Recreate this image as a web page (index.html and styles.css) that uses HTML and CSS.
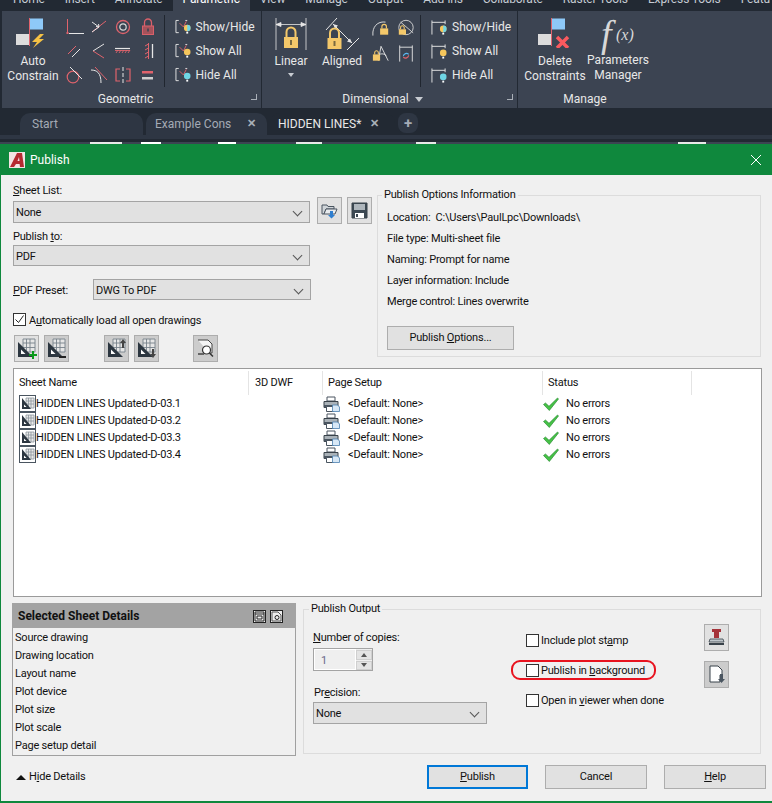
FILE: index.html
```html
<!DOCTYPE html>
<html lang="en">
<head>
    <meta charset="UTF-8">
    <title>Publish</title>
    <link rel="stylesheet" href="styles.css">
</head>
<body>
    <svg class="defs" width="0" height="0">
        <symbol id="sheet" viewBox="0 0 17 17">
            <rect x="0.5" y="0.5" width="16" height="16" fill="#fff" stroke="#4a5560"/>
            <path d="M7 3h8v10H7zM9.5 3v10M12 3v10M7 6h8M7 9h8" fill="#e8e8e8" stroke="#8a949c" stroke-width="0.8"/>
            <path d="M3 3v11h9z" fill="#2c3640"/>
            <path d="M5 9.5v2.5h2.6z" fill="#fff"/>
        </symbol>
        <symbol id="sheet-big" viewBox="0 0 21 21">
            <path d="M7 1h12v13H7zM10.500 1v13M14 1v13M7 5h12M7 9.500h12" fill="#e6e6e6" stroke="#77818a" stroke-width="0.9"/>
            <path d="M2 4v15h15z" fill="#2c3640"/>
            <path d="M5 11.500v4.500h4.500z" fill="#fff"/>
        </symbol>
        <symbol id="printer" viewBox="0 0 17 16">
            <path d="M4 1h8v4H4z" fill="#fff" stroke="#4a5560"/>
            <path d="M1 5.500h14v6H1z" fill="#aab2b8" stroke="#39424a"/>
            <path d="M1 9h14v2.500H1z" fill="#4a5560"/>
            <path d="M3.500 10.500h7v5h-7z" fill="#fff" stroke="#4a5560"/>
            <path d="M9.500 9h5l2 2v4.500h-7z" fill="#d8e8f6" stroke="#4a7fb0" stroke-width="0.8"/>
        </symbol>
        <symbol id="check" viewBox="0 0 16 14">
            <path d="M0.500 7.500l2-1.500 3.500 3.300L14.500 1l1 1L6.300 13.500z" fill="#46c246" stroke="#1f7f2a" stroke-width="0.6"/>
        </symbol>
        <symbol id="bracket" viewBox="0 0 17 16">
            <path d="M4 1H1v13h3" fill="none" stroke="#e6e6e6" stroke-width="1"/>
            <path d="M5 4l4 4 3-6" fill="none" stroke="#e0636c" stroke-width="1"/>
            <path d="M11 1h2" stroke="#e6e6e6"/>
        </symbol>
        <symbol id="dim-bracket" viewBox="0 0 17 17">
            <path d="M1 1v15M15 1v4M1 3h14" fill="none" stroke="#e6e6e6" stroke-width="1"/>
        </symbol>
    </svg>

    <div class="app-tabs">
        <span>Home</span><span>Insert</span><span>Annotate</span><span class="active">Parametric</span><span>View</span><span>Manage</span><span>Output</span><span>Add-ins</span><span>Collaborate</span><span>Raster Tools</span><span>Express Tools</span><span>Featu</span>
    </div>

    <div class="ribbon">
        <section class="panel panel-geo">
            <div class="panel-body">
                <div class="big-btn big-auto">
                    <svg width="34" height="30" viewBox="0 0 34 30">
                        <rect x="14" y="0.500" width="13" height="11" fill="#8ec9f8"/>
                        <rect x="0" y="16" width="13" height="11" fill="#dcdcdc"/>
                        <path d="M13.500 0v28" stroke="#e0636c" stroke-width="1"/>
                        <path d="M24 16l-8 8h5l-4 6 11-9h-5l5-5z" fill="#f5c244"/>
                    </svg>
                    <div>Auto<br>Constrain</div>
                </div>
                <div class="mini-grid">
                    <svg viewBox="0 0 18 18"><path d="M2.500 1v13" stroke="#e0636c"/><path d="M4 15.500h15" stroke="#e6e6e6"/><rect x="1.500" y="14" width="2" height="2" fill="#e0636c"/></svg>
                    <svg viewBox="0 0 18 18"><path d="M2 14L16 3" stroke="#e0636c"/><path d="M2 14l7-5" stroke="#e6e6e6"/><path d="M2 4l7 5M9 9l-3-.500M9 9l-.500-3" stroke="#e6e6e6" fill="none"/></svg>
                    <svg viewBox="0 0 18 18"><circle cx="9" cy="9" r="6.500" fill="none" stroke="#e0636c" stroke-width="1.300"/><circle cx="9" cy="9" r="3.200" fill="none" stroke="#d8d8d8" stroke-width="1.200"/></svg>
                    <svg viewBox="0 0 18 18"><path d="M5.500 8V4.500a3.500 3.500 0 0 1 7 0V8" fill="none" stroke="#d9606a" stroke-width="1.300"/><rect x="3.500" y="8" width="11" height="8.500" fill="#a5525b" stroke="#d9606a"/><rect x="8.200" y="10.500" width="1.600" height="3" fill="#3c4452"/></svg>
                    <svg viewBox="0 0 18 18"><path d="M3 12l8-8" stroke="#e0636c"/><path d="M7 15l8-8" stroke="#e6e6e6"/></svg>
                    <svg viewBox="0 0 18 18"><path d="M3 9l11-7" stroke="#e6e6e6"/><path d="M3 9l11 7" stroke="#e0636c"/></svg>
                    <svg viewBox="0 0 18 18"><path d="M1 6.500h15" stroke="#e6e6e6" stroke-width="1.200"/><path d="M2 11l2-3M5 11l2-3M8 11l2-3M11 11l2-3M14 11l2-3M1 8.500h15" stroke="#e0636c" fill="none" stroke-width="0.900"/></svg>
                    <svg viewBox="0 0 18 18"><path d="M13.500 2v14" stroke="#e6e6e6" stroke-width="1.300"/><path d="M9.500 1v16M6 4l3.500-2M6 8l3.500-2M6 12l3.500-2M6 16l3.500-2" stroke="#e0636c" fill="none"/></svg>
                    <svg viewBox="0 0 18 18"><circle cx="8" cy="11" r="5.800" fill="none" stroke="#e0636c" stroke-width="1.200"/><path d="M5 1l12 12" stroke="#e6e6e6"/></svg>
                    <svg viewBox="0 0 18 18"><path d="M1 4c6 0 10 3 10 13" fill="none" stroke="#e6e6e6"/><path d="M5 1l12 13" stroke="#e0636c"/></svg>
                    <svg viewBox="0 0 18 18"><path d="M6 3H2v12h4M12 3h4v12h-4" fill="none" stroke="#e0636c" stroke-width="1.200"/><path d="M9 1v4M9 7v4M9 13v4" stroke="#e6e6e6"/></svg>
                    <svg viewBox="0 0 18 18"><rect x="3" y="5" width="11" height="2.500" fill="#e0636c"/><rect x="3" y="11" width="11" height="2.500" fill="#cfcfcf"/></svg>
                </div>
                <div class="vsep"></div>
                <div class="toggles">
                    <div class="toggle"><svg width="16" height="16" viewBox="0 0 17 16"><use href="#bracket"/><circle cx="13" cy="9" r="3.500" fill="#f5c65c"/><path d="M13 5.500a3.500 3.500 0 0 1 0 7z" fill="#6fd6e6"/><rect x="12" y="13" width="2" height="2" fill="#fff"/></svg>Show/Hide</div>
                    <div class="toggle"><svg width="16" height="16" viewBox="0 0 17 16"><use href="#bracket"/><circle cx="13" cy="9" r="3.500" fill="#f5c65c"/><rect x="12" y="13" width="2" height="2" fill="#fff"/></svg>Show All</div>
                    <div class="toggle"><svg width="16" height="16" viewBox="0 0 17 16"><use href="#bracket"/><circle cx="13" cy="9" r="3.500" fill="#6fd6e6"/><rect x="12" y="13" width="2" height="2" fill="#fff"/></svg>Hide All</div>
                </div>
            </div>
            <div class="panel-title">Geometric<span class="launcher"></span></div>
        </section>

        <section class="panel panel-dim">
            <div class="panel-body">
                <div class="big-btn big-linear">
                    <svg width="32" height="32" viewBox="0 0 32 32">
                        <path d="M1 0v32M31 0v32M1 6.500h30M1 6.500l5-2v4zM31 6.500l-5-2v4z" stroke="#e6e6e6" fill="#e6e6e6" stroke-width="0.800"/>
                        <path d="M11.500 19v-5a4.500 4.500 0 0 1 9 0v5" fill="none" stroke="#f4c86a" stroke-width="2"/>
                        <rect x="9" y="19" width="14" height="11" fill="#f4c86a"/>
                        <rect x="15" y="22" width="2" height="5" fill="#7a6a40"/>
                    </svg>
                    <div>Linear</div>
                    <div class="caret"></div>
                </div>
                <div class="big-btn big-aligned">
                    <svg width="34" height="32" viewBox="0 0 34 32">
                        <path d="M1 12L12 0M22 32L34 20M8 6l19 19" stroke="#e6e6e6" fill="none"/>
                        <path d="M8 6l5 1.500-3 3zM27 25l-5-1.500 3-3z" fill="#e6e6e6"/>
                        <path d="M5 20v-5a4.500 4.500 0 0 1 9 0v5" fill="none" stroke="#f4c86a" stroke-width="2"/>
                        <rect x="2.500" y="20" width="14" height="11" fill="#f4c86a"/>
                        <rect x="8.500" y="23" width="2" height="5" fill="#7a6a40"/>
                    </svg>
                    <div>Aligned</div>
                </div>
                <div class="dim-grid">
                    <svg viewBox="0 0 20 20"><path d="M1 15C2 7 8 3 15 4M1 15v4" fill="none" stroke="#e6e6e6"/><rect x="9" y="11" width="9" height="7" fill="#f4c86a"/><path d="M11 11V9a2.500 2.500 0 0 1 5 0v2" fill="none" stroke="#f4c86a" stroke-width="1.300"/></svg>
                    <svg viewBox="0 0 20 20"><circle cx="10" cy="10" r="8" fill="none" stroke="#d8d8d8"/><path d="M4 4l14 12" stroke="#d8d8d8"/><rect x="2" y="12" width="8" height="6" fill="#f4c86a"/><path d="M4 12v-2a2 2 0 0 1 4 0v2" fill="none" stroke="#f4c86a" stroke-width="1.200"/></svg>
                    <svg viewBox="0 0 20 20"><path d="M10 2L7 18M10 2l8 16M8 11c3-1 6-1 8 2" fill="none" stroke="#e6e6e6"/><rect x="1" y="11" width="8" height="7" fill="#f4c86a"/><path d="M3 11V9a2 2 0 0 1 4 0v2" fill="none" stroke="#f4c86a" stroke-width="1.200"/></svg>
                    <svg viewBox="0 0 20 20"><path d="M3 1v18M17 1v18M3 3h14" fill="none" stroke="#e6e6e6"/><path d="M7 13a3.500 3.500 0 0 1 6-2" fill="none" stroke="#5bb8f0" stroke-width="1.300"/><path d="M13 12a3.500 3.500 0 0 1-6 2" fill="none" stroke="#e0636c" stroke-width="1.300"/></svg>
                </div>
                <div class="vsep"></div>
                <div class="toggles">
                    <div class="toggle"><svg width="16" height="17" viewBox="0 0 17 17"><use href="#dim-bracket"/><circle cx="13" cy="10" r="3.500" fill="#f5c65c"/><path d="M13 6.500a3.500 3.500 0 0 1 0 7z" fill="#6fd6e6"/><rect x="12" y="14" width="2" height="2" fill="#fff"/></svg>Show/Hide</div>
                    <div class="toggle"><svg width="16" height="17" viewBox="0 0 17 17"><use href="#dim-bracket"/><circle cx="13" cy="10" r="3.500" fill="#f5c65c"/><rect x="12" y="14" width="2" height="2" fill="#fff"/></svg>Show All</div>
                    <div class="toggle"><svg width="16" height="17" viewBox="0 0 17 17"><use href="#dim-bracket"/><circle cx="13" cy="10" r="3.500" fill="#6fd6e6"/><rect x="12" y="14" width="2" height="2" fill="#fff"/></svg>Hide All</div>
                </div>
            </div>
            <div class="panel-title">Dimensional <span class="caret caret-inline"></span><span class="launcher"></span></div>
        </section>

        <section class="panel panel-manage">
            <div class="panel-body">
                <div class="big-btn big-delete">
                    <svg width="34" height="30" viewBox="0 0 34 30">
                        <rect x="14" y="0.500" width="13" height="11" fill="#8ec9f8"/>
                        <rect x="0" y="16" width="13" height="11" fill="#dcdcdc"/>
                        <path d="M13.500 0v28" stroke="#e0636c" stroke-width="1"/>
                        <path d="M19 19l11 11M30 19L19 30" stroke="#fa5a5f" stroke-width="3.500"/>
                    </svg>
                    <div>Delete<br>Constraints</div>
                </div>
                <div class="big-btn big-params">
                    <div class="fx"><i class="fx-f">f</i><i class="fx-x">(x)</i></div>
                    <div>Parameters<br>Manager</div>
                </div>
            </div>
            <div class="panel-title">Manage</div>
        </section>
    </div>

    <div class="doc-tabs">
        <div class="doc-tab doc-start">Start</div>
        <div class="doc-tab doc-example">Example Cons<span class="tab-x">✕</span></div>
        <div class="doc-tab doc-active">HIDDEN LINES*<span class="tab-x">✕</span></div>
        <div class="doc-add">+</div>
    </div>
    <div class="tab-strip"></div>
    <div class="tool-strip"></div>

    <div class="dialog">
        <div class="titlebar">
            <svg class="app-logo" width="16" height="16" viewBox="0 0 16 16">
                <rect width="16" height="16" fill="#f3e4e4"/>
                <path d="M1 15L8 1h5l2 14h-4l-.4-3H7l-2 3zM8.500 9h2l-.5-4z" fill="#b52a30"/>
            </svg>
            <span class="title-text">Publish</span>
            <svg class="title-close" width="12" height="12" viewBox="0 0 12 12"><path d="M1 1l10 10M11 1L1 11" stroke="#fff" stroke-width="1"/></svg>
        </div>

        <div class="dialog-body">
            <div class="top">
                <div class="top-left">
                    <div class="label label-first"><u>S</u>heet List:</div>
                    <div class="list-row">
                        <div class="select select-sheet">None</div>
                        <button class="icon-btn btn-open">
                            <svg width="17" height="17" viewBox="0 0 17 17"><path d="M1 3h5l1 1.500h6V7H5L3 12H1z" fill="#cfd4d8" stroke="#4a5560"/><path d="M5 7h11l-2 5H3z" fill="#e8ebee" stroke="#4a5560"/><path d="M9 9h3v4h2l-3.500 3.500L7 13h2z" fill="#2f7fd0"/></svg>
                        </button>
                        <button class="icon-btn btn-save">
                            <svg width="17" height="17" viewBox="0 0 17 17"><path d="M1 1h15v15H1z" fill="#3c4852" stroke="#39424a"/><rect x="3" y="2" width="11" height="6" fill="#aeb6bc"/><rect x="4" y="11" width="9" height="5" fill="#fff"/><rect x="5" y="12" width="2" height="3" fill="#3c4852"/></svg>
                        </button>
                    </div>
                    <div class="label label-to">Publish <u>t</u>o:</div>
                    <div class="select select-to">PDF</div>
                    <div class="preset-row">
                        <div class="label"><u>P</u>DF Preset:</div>
                        <div class="select select-preset">DWG To PDF</div>
                    </div>
                    <label class="check check-auto"><span class="box box-on"><svg width="11" height="11" viewBox="0 0 11 11"><path d="M1.500 5.500l3 3 5-7" fill="none" stroke="#222" stroke-width="1"/></svg></span><span class="check-text">A<u>u</u>tomatically load all open drawings</span></label>
                    <div class="sheet-tools">
                        <button class="icon-btn"><svg width="21" height="21"><use href="#sheet-big"/><path d="M16 13h2v3h3v2h-3v3h-2v-3h-3v-2h3z" fill="#0a9a1a"/></svg></button>
                        <button class="icon-btn is-off"><svg width="21" height="21"><use href="#sheet-big"/><rect x="13" y="18" width="7" height="2" fill="#222"/></svg></button>
                        <button class="icon-btn is-off tool-gap"><svg width="21" height="21"><use href="#sheet-big"/><path d="M17 1l3 4h-2v5h-2V5h-2z" fill="#444"/></svg></button>
                        <button class="icon-btn is-off"><svg width="21" height="21"><use href="#sheet-big"/><path d="M16 11h2v5h2l-3 4-3-4h2z" fill="#444"/></svg></button>
                        <button class="icon-btn is-off tool-gap2"><svg width="19" height="19" viewBox="0 0 19 19"><path d="M2 1h10l4 4v9h-3M8 15H2z" fill="#f4f4f4" stroke="#444"/><circle cx="10.500" cy="11" r="4" fill="#fff" stroke="#333" stroke-width="1.200"/><path d="M13.500 14l3.500 3.500" stroke="#333" stroke-width="1.500"/></svg></button>
                    </div>
                </div>

                <fieldset class="group group-info">
                    <legend>Publish Options Information</legend>
                    <div class="info-row">Location: &nbsp;C:\Users\PaulLpc\Downloads\</div>
                    <div class="info-row">File type: Multi-sheet file</div>
                    <div class="info-row">Naming: Prompt for name</div>
                    <div class="info-row">Layer information: Include</div>
                    <div class="info-row">Merge control: Lines overwrite</div>
                    <button class="btn btn-options">Publish <u>O</u>ptions...</button>
                </fieldset>
            </div>

            <div class="sheets">
                <div class="sheets-row sheets-head">
                    <div class="col col-name">Sheet Name</div>
                    <div class="col col-3d">3D DWF</div>
                    <div class="col col-setup">Page Setup</div>
                    <div class="col col-status">Status</div>
                </div>
                <div class="sheets-row">
                    <div class="col col-name"><svg width="17" height="17"><use href="#sheet"/></svg>HIDDEN LINES Updated-D-03.1</div>
                    <div class="col col-3d"></div>
                    <div class="col col-setup"><svg width="17" height="16"><use href="#printer"/></svg>&lt;Default: None&gt;</div>
                    <div class="col col-status"><svg width="16" height="14"><use href="#check"/></svg>No errors</div>
                </div>
                <div class="sheets-row">
                    <div class="col col-name"><svg width="17" height="17"><use href="#sheet"/></svg>HIDDEN LINES Updated-D-03.2</div>
                    <div class="col col-3d"></div>
                    <div class="col col-setup"><svg width="17" height="16"><use href="#printer"/></svg>&lt;Default: None&gt;</div>
                    <div class="col col-status"><svg width="16" height="14"><use href="#check"/></svg>No errors</div>
                </div>
                <div class="sheets-row">
                    <div class="col col-name"><svg width="17" height="17"><use href="#sheet"/></svg>HIDDEN LINES Updated-D-03.3</div>
                    <div class="col col-3d"></div>
                    <div class="col col-setup"><svg width="17" height="16"><use href="#printer"/></svg>&lt;Default: None&gt;</div>
                    <div class="col col-status"><svg width="16" height="14"><use href="#check"/></svg>No errors</div>
                </div>
                <div class="sheets-row">
                    <div class="col col-name"><svg width="17" height="17"><use href="#sheet"/></svg>HIDDEN LINES Updated-D-03.4</div>
                    <div class="col col-3d"></div>
                    <div class="col col-setup"><svg width="17" height="16"><use href="#printer"/></svg>&lt;Default: None&gt;</div>
                    <div class="col col-status"><svg width="16" height="14"><use href="#check"/></svg>No errors</div>
                </div>
            </div>

            <div class="bottom">
                <div class="details">
                    <div class="details-head">
                        <b>Selected Sheet Details</b>
                        <span class="head-icon"><svg width="11" height="11" viewBox="0 0 11 11"><path d="M1 1h9v2H1zM1 3v7h9V3M3 5h5v3H3z" fill="none" stroke="#222"/></svg></span>
                        <span class="head-icon"><svg width="11" height="11" viewBox="0 0 11 11"><path d="M1 1h6l3 3v6H1z" fill="none" stroke="#555"/><circle cx="6" cy="6.500" r="2" fill="none" stroke="#222"/></svg></span>
                    </div>
                    <div class="details-row">Source drawing</div>
                    <div class="details-row">Drawing location</div>
                    <div class="details-row">Layout name</div>
                    <div class="details-row">Plot device</div>
                    <div class="details-row">Plot size</div>
                    <div class="details-row">Plot scale</div>
                    <div class="details-row">Page setup detail</div>
                </div>

                <fieldset class="group group-output">
                    <legend>Publish Output</legend>
                    <div class="output-left">
                        <div class="label"><u>N</u>umber of copies:</div>
                        <div class="spinner">
                            <span class="spin-val">1</span>
                            <span class="spin-btns"><i class="spin-up"></i><i class="spin-down"></i></span>
                        </div>
                        <div class="label label-prec">Pr<u>e</u>cision:</div>
                        <div class="select select-prec">None</div>
                    </div>
                    <div class="output-checks">
                        <label class="check"><span class="box"></span><span>Include plot st<u>a</u>mp</span></label>
                        <label class="check check-bg"><span class="box"></span><span>Publish in <u>b</u>ackground</span><span class="red-ring"></span></label>
                        <label class="check"><span class="box"></span><span>Open in <u>v</u>iewer when done</span></label>
                    </div>
                    <div class="output-btns">
                        <button class="icon-btn"><svg width="19" height="19" viewBox="0 0 19 19"><path d="M5 1h9v3h-2v6h-5V4H5z" fill="#a5333a"/><path d="M3 11h13l1 3H2z" fill="#bfc6cb" stroke="#39424a" stroke-width="0.800"/><rect x="2" y="15" width="15" height="2" fill="#39424a"/></svg></button>
                        <button class="icon-btn is-off"><svg width="19" height="19" viewBox="0 0 19 19"><path d="M3 1h8l4 4v5h-2v7H3z" fill="#fff" stroke="#39424a"/><path d="M13 9h3v5h2l-3.500 4-3.500-4h2z" fill="#4a5560"/></svg></button>
                    </div>
                </fieldset>
            </div>

            <div class="footer">
                <div class="hide-details"><span class="tri-up"></span><span>H<u>i</u>de Details</span></div>
                <button class="btn btn-main btn-default"><u>P</u>ublish</button>
                <button class="btn btn-main btn-gap">Cancel</button>
                <button class="btn btn-main btn-gap"><u>H</u>elp</button>
            </div>
        </div>
    </div>
</body>
</html>
```

FILE: styles.css
```css
* {
    box-sizing: border-box;
}
html, body {
    margin: 0;
    padding: 0;
}
body {
    width: 772px;
    height: 803px;
    overflow: hidden;
    background: #222933;
    font-family: Roboto, "Liberation Sans", sans-serif;
    font-size: 12px;
    color: #111;
}
.defs {
    position: absolute;
}
svg {
    display: block;
    flex: none;
}

/* app tabs */
.app-tabs {
    height: 11px;
    overflow: hidden;
    display: flex;
    padding-left: 3px;
    color: #c6ccd4;
    font-size: 12px;
    letter-spacing: -0.12px;
    line-height: 11px;
    background: #222933;
}
.app-tabs span {
    padding: 0 10px;
    margin-top: -6px;
    height: 17px;
    white-space: nowrap;
}
.app-tabs .active {
    background: #3c4452;
    color: #fff;
}

/* ribbon */
.ribbon {
    height: 97px;
    display: flex;
    padding-left: 2px;
    background: #222933;
    color: #e8e8e8;
}
.panel {
    height: 97px;
    display: flex;
    flex-direction: column;
    background: #3c4452;
    border-right: 1px solid #222933;
}
.panel-geo {
    width: 260px;
}
.panel-dim {
    width: 256px;
}
.panel-manage {
    width: 254px;
    border-right: 0;
}
.panel-body {
    height: 80px;
    display: flex;
    padding-top: 4px;
}
.panel-title {
    height: 17px;
    line-height: 16px;
    text-align: center;
    position: relative;
    color: #e8e8e8;
}
.panel-geo .panel-title {
    padding-right: 12px;
}
.panel-dim .panel-title {
    padding-right: 14px;
}
.panel-manage .panel-title {
    padding-right: 120px;
}
.launcher {
    position: absolute;
    right: 4px;
    top: 3px;
    width: 6px;
    height: 6px;
    border-right: 1.500px solid #aab0b8;
    border-bottom: 1.500px solid #aab0b8;
}
.big-btn {
    display: flex;
    flex-direction: column;
    align-items: center;
    text-align: center;
    line-height: 15px;
    white-space: nowrap;
}
.big-btn svg {
    margin-bottom: 6px;
}
.big-auto {
    width: 56px;
    margin-left: 3px;
    padding-top: 3px;
}
.big-linear {
    width: 40px;
    margin-left: 9px;
    padding-top: 3px;
}
.big-linear svg,
.big-aligned svg {
    margin-bottom: 4px;
}
.big-aligned {
    width: 48px;
    margin-left: 7px;
    padding-top: 3px;
}
.big-delete {
    width: 66px;
    margin-left: 4px;
    padding-top: 3px;
}
.big-params {
    width: 60px;
}
.caret {
    width: 0;
    height: 0;
    margin-top: 4px;
    border-left: 3.500px solid transparent;
    border-right: 3.500px solid transparent;
    border-top: 4px solid #c8ccd2;
}
.caret-inline {
    display: inline-block;
    vertical-align: middle;
    margin: 0 0 0 3px;
    border-left-width: 4px;
    border-right-width: 4px;
    border-top-width: 5px;
}
.mini-grid {
    display: grid;
    grid-template-columns: repeat(4, 18px);
    grid-auto-rows: 18px;
    column-gap: 6.500px;
    row-gap: 6px;
    margin: 3px 0 0 4px;
}
.mini-grid svg {
    width: 18px;
    height: 18px;
    overflow: visible;
}
.dim-grid {
    display: grid;
    grid-template-columns: repeat(2, 18px);
    grid-auto-rows: 19px;
    column-gap: 7px;
    row-gap: 7px;
    margin: 3px 0 0 6px;
}
.dim-grid svg {
    width: 18px;
    height: 19px;
}
.vsep {
    width: 1px;
    height: 72px;
    margin: 0 0 0 7px;
    background: #20262f;
}
.panel-dim .vsep {
    margin-left: 5px;
}
.toggles {
    margin-left: 10px;
    padding-top: 4px;
    display: flex;
    flex-direction: column;
    gap: 8px;
}
.toggle {
    height: 16px;
    display: flex;
    align-items: center;
    gap: 5px;
    white-space: nowrap;
}
.fx {
    height: 38px;
    width: 36px;
    position: relative;
    font-family: "Liberation Serif", serif;
    color: #d8d8d8;
}
.fx-f {
    font-size: 38px;
    line-height: 38px;
    position: absolute;
    left: 1px;
    top: 0;
}
.fx-x {
    font-size: 16px;
    line-height: 18px;
    position: absolute;
    left: 16px;
    top: 11px;
}

/* drawing tabs */
.doc-tabs {
    height: 27px;
    padding: 5px 0 0 20px;
    display: flex;
    gap: 3px;
    color: #a4abb5;
    background: #222933;
}
.doc-tab {
    height: 22px;
    line-height: 22px;
    border-radius: 10px 10px 0 0;
    background: #2e3643;
    display: flex;
    justify-content: space-between;
    white-space: nowrap;
}
.doc-start {
    width: 123px;
    padding-left: 12px;
}
.doc-example {
    width: 121px;
    padding: 0 11px 0 9px;
}
.doc-active {
    width: 125px;
    padding: 0 16px 0 8px;
    background: #222933;
    color: #e8e8e8;
}
.tab-x {
    color: #aab0b8;
    font-size: 11px;
    font-weight: 700;
}
.doc-add {
    width: 20px;
    height: 20px;
    border-radius: 8px;
    background: #2e3643;
    text-align: center;
    font-size: 15px;
    font-weight: 700;
    line-height: 20px;
}
.tab-strip {
    height: 4px;
    background: #2e3643;
}
.tool-strip {
    height: 5px;
    background-color: #222933;
    background-image:
        linear-gradient(90deg,
            #3c4452 90px, #e8e8e8 90px, #e8e8e8 122px,
            #3c4452 122px, #3c4452 141px, #fff 141px, #fff 161px,
            #3c4452 161px, #3c4452 218px, #fff 218px, #fff 236px,
            #3c4452 236px, #3c4452 296px, #e8e8e8 296px, #e8e8e8 322px,
            #3c4452 322px, #3c4452 416px, #e8e8e8 416px, #e8e8e8 436px,
            #3c4452 436px, #3c4452 678px, #e8e8e8 678px, #e8e8e8 706px,
            #3c4452 706px);
    background-size: 100% 2px;
    background-position: bottom;
    background-repeat: no-repeat;
}

/* dialog */
.dialog {
    height: 659px;
    display: flex;
    flex-direction: column;
    background: #f0f0f0;
    border-left: 1px solid #0f883d;
    border-bottom: 2px solid #0f883d;
}
.titlebar {
    height: 31px;
    margin-left: -1px;
    display: flex;
    align-items: center;
    padding: 0 10px 0 9px;
    background: #0f883d;
    color: #fff;
}
.app-logo {
    margin-right: 5px;
}
.title-text {
    flex: 1;
}
.dialog-body {
    flex: 1;
    padding-left: 12px;
    font-size: 11px;
    letter-spacing: -0.2px;
    line-height: 16px;
}
.top {
    height: 193px;
    display: flex;
}
.top-left {
    width: 364px;
}
.label {
    height: 16px;
    line-height: 16px;
    white-space: nowrap;
}
.top-left .label {
    padding-top: 1px;
}
.label-first {
    margin: 7px 0 -1px;
}
.list-row {
    display: flex;
    height: 27px;
}
.select {
    height: 22px;
    line-height: 22px;
    padding-left: 2px;
    border: 1px solid #a4a4a4;
    background: #e1e1e1;
    position: relative;
}
.select::after {
    content: "";
    position: absolute;
    right: 8px;
    top: 6px;
    width: 6px;
    height: 6px;
    border-right: 1px solid #555;
    border-bottom: 1px solid #555;
    transform: rotate(45deg);
}
.select-sheet {
    width: 297px;
    margin-top: 4px;
}
.select-to {
    width: 297px;
    height: 21px;
}
.select-preset {
    width: 218px;
    height: 21px;
}
.select-prec {
    width: 174px;
}
.label-to {
    margin-top: 4px;
    margin-bottom: 1px;
}
.preset-row {
    margin-top: 13px;
    display: flex;
    align-items: center;
    justify-content: space-between;
    width: 298px;
}
.icon-btn {
    width: 25px;
    height: 27px;
    padding: 0;
    display: flex;
    align-items: center;
    justify-content: center;
    border: 1px solid #adadad;
    background: #e1e1e1;
}
.is-off {
    background: #cccccc;
}
.btn-open {
    margin-left: 7px;
}
.btn-save {
    margin-left: 5px;
}
.check {
    display: flex;
    align-items: center;
    height: 13px;
    white-space: nowrap;
    position: relative;
}
.check-auto {
    margin-top: 13px;
}
.check-auto .box {
    margin-right: 3px;
}
.check-text {
    padding-top: 2px;
}
.box {
    width: 13px;
    height: 13px;
    flex: none;
    margin-right: 2px;
    border: 1px solid #333;
    background: #fff;
    display: flex;
    align-items: center;
    justify-content: center;
}
.sheet-tools {
    margin-top: 9px;
    padding-left: 1px;
    display: flex;
    gap: 5px;
}
.tool-gap {
    margin-left: 30px;
}
.tool-gap2 {
    margin-left: 29px;
}
.group {
    margin: 0;
    padding: 0;
    border: 1px solid #dcdcdc;
    min-width: 0;
}
.group legend {
    padding: 0 2px;
    margin-left: 5px;
    line-height: 14px;
}
.group-info {
    width: 384px;
    height: 169px;
    margin-top: 13px;
    padding: 5px 0 0 9px;
}
.group-info legend {
    margin-left: -5px;
}
.info-row {
    height: 21px;
    line-height: 21px;
}
.btn {
    border: 1px solid #adadad;
    background: #e1e1e1;
    font: inherit;
    letter-spacing: inherit;
    color: #111;
    padding: 0;
}
.btn-options {
    width: 127px;
    height: 24px;
    margin-top: 14px;
    display: block;
}

/* sheet list */
.sheets {
    width: 749px;
    height: 229px;
    padding: 2px 0 0 0;
    border: 1px solid #9a9a9a;
    background: #fff;
}
.sheets-row {
    display: flex;
    height: 17px;
    align-items: center;
}
.sheets-head {
    height: 24px;
}
.col {
    height: 100%;
    display: flex;
    align-items: center;
    white-space: nowrap;
}
.col-name {
    width: 235px;
    padding-left: 5px;
}
.col-3d {
    width: 74px;
    padding-left: 6px;
}
.col-setup {
    width: 220px;
    gap: 8px;
}
.col-status {
    width: 149px;
    gap: 7px;
}
.sheets-head .col {
    border-right: 1px solid #e4e4e4;
}
.sheets-head .col-setup,
.sheets-head .col-status {
    padding-left: 5px;
}

/* bottom */
.bottom {
    height: 161px;
    display: flex;
    align-items: flex-start;
}
.details {
    width: 284px;
    height: 153px;
    margin: 6px 0 0 -1px;
    border: 1px solid #a0a0a0;
    border-top: 0;
}
.details-head {
    height: 25px;
    margin: 0 -1px;
    padding: 1px 13px 0 6px;
    display: flex;
    align-items: center;
    gap: 4px;
    background: #a3a3a3;
    color: #111;
}
.details-head b {
    flex: 1;
    font-size: 12px;
    letter-spacing: 0;
}
.head-icon {
    width: 13px;
    height: 13px;
    display: flex;
    align-items: center;
    justify-content: center;
    border: 1px solid #222;
    background: #eee;
}
.details-row {
    height: 18px;
    line-height: 20px;
    padding-left: 2px;
}
.group-output {
    width: 458px;
    height: 152px;
    margin: 5px 0 0 7px;
    padding: 8px 0 0;
    display: flex;
}
.output-left {
    width: 222px;
    padding: 6px 0 0 9px;
}
.spinner {
    width: 60px;
    height: 23px;
    margin-top: 2px;
    border: 1px solid #a4a4a4;
    display: flex;
    background: #efefef;
    color: #6a6a8a;
}
.spin-val {
    flex: 1;
    padding-left: 6px;
    line-height: 21px;
    border: 1px solid #fff;
}
.spin-btns {
    width: 16px;
    display: flex;
    flex-direction: column;
    gap: 1px;
    padding-top: 1px;
}
.spin-btns i {
    flex: 1;
    display: flex;
    align-items: center;
    justify-content: center;
    background: #e4e4e4;
    border: 1px solid #cfcfcf;
}
.spin-up::after {
    content: "";
    border-left: 3px solid transparent;
    border-right: 3px solid transparent;
    border-bottom: 4px solid #555;
}
.spin-down::after {
    content: "";
    border-left: 3px solid transparent;
    border-right: 3px solid transparent;
    border-top: 4px solid #555;
}
.label-prec {
    margin-top: 14px;
    margin-bottom: 1px;
    padding-left: 1px;
}
.output-checks {
    width: 178px;
    padding-top: 10px;
    display: flex;
    flex-direction: column;
    gap: 17px;
}
.red-ring {
    position: absolute;
    left: -15px;
    top: -4px;
    width: 145px;
    height: 20px;
    border: 2.500px solid #e8131f;
    border-radius: 9px;
}
.output-btns {
    display: flex;
    flex-direction: column;
    gap: 10px;
}

/* footer */
.footer {
    height: 24px;
    margin-top: 7px;
    display: flex;
    align-items: center;
}
.hide-details {
    width: 414px;
    flex: none;
    display: flex;
    align-items: center;
    padding-left: 3px;
}
.tri-up {
    width: 0;
    height: 0;
    margin-right: 3px;
    border-left: 5px solid transparent;
    border-right: 5px solid transparent;
    border-bottom: 5px solid #111;
}
.btn-main {
    width: 102px;
    height: 24px;
    flex: none;
}
.btn-gap {
    margin-left: 17px;
}
.btn-default {
    width: 101px;
    border: 2px solid #0078d7;
}
```
